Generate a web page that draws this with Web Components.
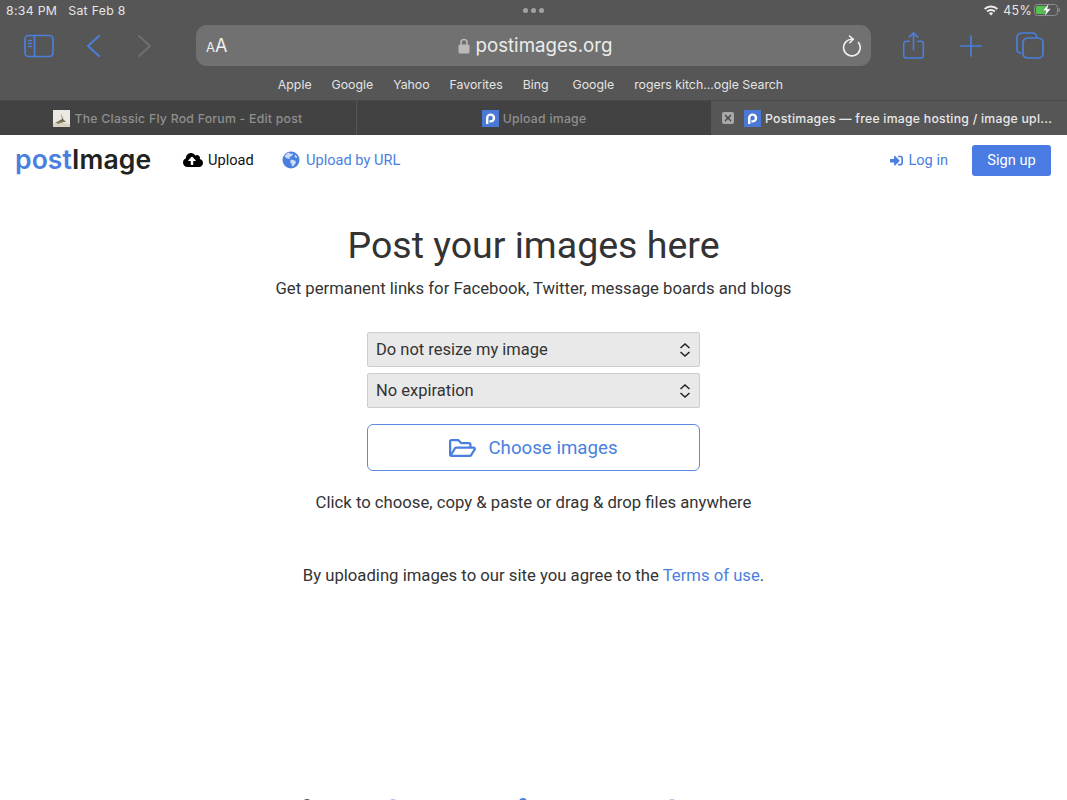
<!DOCTYPE html>
<html lang="en">
<head>
<meta charset="utf-8">
<title>Postimages</title>
<style>
  html, body { margin: 0; height: 800px; overflow: hidden; background: #fff; }
</style>
</head>
<body>
<safari-chrome></safari-chrome>
<site-header></site-header>
<upload-panel></upload-panel>
<feature-row></feature-row>

<script>
const PI_ICON = `<svg viewBox="0 0 17 17" width="17" height="17"><rect width="17" height="17" fill="#4a78d6"/><path d="M4 14V8a4.6 4.6 0 1 1 4.6 4.6H7.4V10.200h1.200a2.200 2.200 0 1 0-2.200-2.200V14z" fill="#fff"/></svg>`;

class SafariChrome extends HTMLElement {
  constructor() {
    super();
    this.attachShadow({ mode: 'open' });
    this.shadowRoot.innerHTML = `
      <style>
        :host {
          display: block;
          height: 135px;
          background: #565656;
          color: #eee;
          font-family: Inter, "Noto Sans", sans-serif;
        }
        .status {
          height: 22px;
          box-sizing: border-box;
          padding: 0 7px 2px 6px;
          display: grid;
          grid-template-columns: 1fr auto 1fr;
          align-items: center;
          font-size: 12.3px;
          letter-spacing: .3px;
          color: #e6e6e6;
        }
        .status .left { display: flex; gap: 11px; }
        .dots { display: flex; gap: 3px; }
        .dots i { width: 5px; height: 5px; border-radius: 50%; background: #a2a2a2; }
        .status .right { display: flex; justify-content: flex-end; align-items: center; gap: 4px; font-size: 12.5px; }
        .status .battery { margin-left: -2px; }
        .toolbar {
          height: 47px;
          display: flex;
          align-items: center;
        }
        .toolbar svg { display: block; fill: none; stroke: #4a7fdb; stroke-width: 1.7; stroke-linecap: round; stroke-linejoin: round; }
        .address {
          width: 675px;
          height: 41px;
          margin: 0 31px 0 0;
          box-sizing: border-box;
          border-radius: 11px;
          background: #717171;
          display: grid;
          grid-template-columns: 1fr auto 1fr;
          align-items: center;
          padding: 0 10px;
        }
        .aa { font-size: 13px; line-height: 1; color: #f0f0f0; padding-top: 1px; }
        .aa b { font-weight: 400; font-size: 18px; }
        .url { display: flex; align-items: center; gap: 5px; margin-left: 4px; font-size: 18.7px; color: #ececec; }
        .reload { justify-self: end; }
        .reload svg { stroke: #f0f0f0; }
        .marks {
          height: 31px;
          display: flex;
          justify-content: center;
          align-items: center;
          gap: 20px;
          font-size: 12.3px;
          color: #e4e4e4;
          padding-right: 6px;
        }
        .tabs {
          height: 35px;
          display: grid;
          grid-template-columns: 356px 355px 1fr;
          box-sizing: border-box;
          border-top: 1px solid #4a4a4a;
          font-size: 12.25px;
          font-weight: 500;
          letter-spacing: .25px;
        }
        .tab {
          display: flex;
          align-items: center;
          justify-content: center;
          gap: 4px;
          background: #424242;
          color: #8f8f8f;
          white-space: nowrap;
        }
        .tab + .tab { border-left: 1px solid #555; }
        .tab.active { background: #565656; color: #e8e8e8; justify-content: flex-start; padding-left: 11px; gap: 4px; border-left: 0; }
        .close {
          width: 12px; height: 12px; border-radius: 2px; background: #a8a8a8;
          margin-right: 6px; display: grid; place-items: center;
        }
      </style>
      <div class="status">
        <div class="left"><span>8:34 PM</span><span>Sat Feb 8</span></div>
        <div class="dots"><i></i><i></i><i></i></div>
        <div class="right">
          <svg width="16" height="12" viewBox="0 0 16 12"><path d="M1 4.300a10 10 0 0 1 14 0l-1.300 1.400a8.200 8.200 0 0 0-11.400 0z M3.500 6.800a6.500 6.500 0 0 1 9 0l-1.300 1.400a4.600 4.600 0 0 0-6.400 0z M5.900 9.300a3 3 0 0 1 4.200 0L8 11.400z" fill="#eee"/></svg>
          <span>45%</span>
          <svg class="battery" width="26" height="14" viewBox="0 0 26 14">
            <rect x=".5" y="1.500" width="23" height="11" rx="3" fill="none" stroke="#8e8e8e"/>
            <rect x="2" y="3" width="11" height="8" rx="1.500" fill="#54c24f"/>
            <rect x="24.500" y="5" width="1.200" height="4" fill="#8e8e8e"/>
            <path d="M15 0L8.500 7.800h3.500L10 14l7-8.200h-3.500z" fill="#fff" stroke="#565656" stroke-width=".5"/>
          </svg>
        </div>
      </div>
      <div class="toolbar">
        <svg style="margin-left:24px" width="30" height="24" viewBox="0 0 30 24"><rect x="1" y="1.500" width="28" height="21" rx="3.500"/><path d="M10.500 1.500v21"/><path d="M4.500 6.500h3M4.500 9.500h3M4.500 12.500h3" stroke-width="1.300"/></svg>
        <svg style="margin-left:32px" width="15" height="24" viewBox="0 0 15 24"><path d="M13 2L2 12l11 10" stroke-width="2"/></svg>
        <svg style="margin-left:36px;stroke:#6f6f6f" width="15" height="24" viewBox="0 0 15 24"><path d="M2 2l11 10L2 22" stroke-width="2"/></svg>
        <svg style="margin-left:43px;width:1px"></svg>
        <div class="address">
          <span class="aa">A<b>A</b></span>
          <span class="url">
            <svg width="12" height="16" viewBox="0 0 12 16" style="stroke:none"><path d="M3 7V4.500a3 3 0 0 1 6 0V7" fill="none" stroke="#b9b9b9" stroke-width="1.500"/><rect x="0.500" y="6.500" width="11" height="9" rx="1.500" fill="#b9b9b9"/></svg>
            postimages.org
          </span>
          <span class="reload">
            <svg width="20" height="22" viewBox="0 0 20 22"><path d="M12 4.300A8.300 8.300 0 1 0 17.500 7.500" stroke-width="1.600"/><path d="M8.500 1l3.800 3.300-3.500 3.500" stroke-width="1.600"/></svg>
          </span>
        </div>
        <svg width="23" height="27" viewBox="0 0 23 29"><path d="M7 10H3.500A2.500 2.500 0 0 0 1 12.500v13A2.500 2.500 0 0 0 3.500 28h16a2.500 2.500 0 0 0 2.500-2.500v-13a2.500 2.500 0 0 0-2.500-2.500H16"/><path d="M11.500 19V1.500M7 5.500l4.500-4.500L16 5.500"/></svg>
        <svg style="margin-left:35px" width="22" height="22" viewBox="0 0 22 22"><path d="M11 1v20M1 11h20"/></svg>
        <svg style="margin-left:34px" width="28" height="27" viewBox="0 0 28 27"><path d="M4.500 21A3.500 3.500 0 0 1 1 17.500v-12A4.500 4.500 0 0 1 5.500 1H17a3.500 3.500 0 0 1 3.500 3.500"/><rect x="7" y="6" width="20" height="20" rx="4.500"/></svg>
      </div>
      <div class="marks">
        <span>Apple</span><span>Google</span><span>Yahoo</span><span>Favorites</span><span>Bing</span>
        <span style="margin-left:4px">Google</span><span>rogers kitch...ogle Search</span>
      </div>
      <div class="tabs">
        <div class="tab">
          <svg width="17" height="17" viewBox="0 0 17 17"><rect width="17" height="17" fill="#ece9e2"/><path d="M0 14c4-2 10-1 17 0v3H0z" fill="#d8d2c2"/><path d="M8 3l1 6-5 3h9l-3-3z" fill="#6e6552"/><path d="M2 12l12-1-9 3z" fill="#8c8168"/></svg>
          <span>The Classic Fly Rod Forum - Edit post</span>
        </div>
        <div class="tab">${PI_ICON}<span>Upload image</span></div>
        <div class="tab active">
          <span class="close"><svg width="8" height="8" viewBox="0 0 8 8"><path d="M1 1l6 6M7 1L1 7" stroke="#444" stroke-width="1.400"/></svg></span>
          ${PI_ICON}<span>Postimages — free image hosting / image upl...</span>
        </div>
      </div>`;
  }
}

class SiteHeader extends HTMLElement {
  constructor() {
    super();
    this.attachShadow({ mode: 'open' });
    this.shadowRoot.innerHTML = `
      <style>
        :host {
          display: flex;
          align-items: center;
          height: 50px;
          padding: 0 16px 0 15px;
          font-family: Roboto, sans-serif;
          font-size: 14.600px;
          color: #4a7fe0;
        }
        .logo {
          font-family: Inter, Roboto, sans-serif;
          font-size: 26.500px;
          font-weight: 600;
          letter-spacing: .1px;
          color: #222;
          width: 168px;
          margin-bottom: 2px;
          white-space: nowrap;
        }
        .logo span { color: #4a7fe0; }
        .item { display: flex; align-items: center; gap: 6px; }
        .upload { color: #111; width: 99px; gap: 5px; }
        .spacer { flex: 1; }
        .login { margin-right: 24px; gap: 5px; }
        .signup {
          width: 79px; height: 31px;
          display: grid; place-items: center;
          background: #4a7be3;
          color: #fff;
          border-radius: 3px;
        }
      </style>
      <div class="logo"><span>post</span>Image</div>
      <div class="item upload">
        <svg width="20" height="16" viewBox="0 0 640 512"><path fill="#000" d="M537.600 226.600c4.100-10.700 6.400-22.400 6.400-34.600 0-53-43-96-96-96-19.700 0-38.100 6-53.300 16.200C367 64.200 315.300 32 256 32c-88.400 0-160 71.600-160 160 0 2.700.1 5.400.2 8.100C40.200 219.800 0 273.200 0 336c0 79.500 64.500 144 144 144h368c70.700 0 128-57.300 128-128 0-61.900-44-113.600-102.400-125.400zM393.400 288H328v112c0 8.800-7.200 16-16 16h-48c-8.800 0-16-7.200-16-16V288h-65.400c-14.300 0-21.400-17.200-11.300-27.300l105.400-105.400c6.200-6.200 16.400-6.200 22.600 0l105.400 105.400c10.100 10.100 2.900 27.300-11.300 27.300z"/></svg>
        <span>Upload</span>
      </div>
      <div class="item">
        <svg width="18" height="18" viewBox="0 0 18 18"><circle cx="9" cy="9" r="8.500" fill="#4a7fe0"/><path d="M6 1.500L9.500 3l2-.5L10 5 8 5.500 7.500 8 4 7 2.500 5z M9 8.500l4 1 1 2-2.500 3.500-1.500.5-.5-3-1.500-1.500z M13.500 3.500l2 3-1.500 .5-1.500-1.500z" fill="#cfdcf6"/></svg>
        <span>Upload by URL</span>
      </div>
      <div class="spacer"></div>
      <div class="item login">
        <svg width="13" height="13" viewBox="0 0 512 512"><path fill="#4a7fe0" d="M416 448h-84c-6.600 0-12-5.400-12-12v-40c0-6.600 5.400-12 12-12h84c17.700 0 32-14.300 32-32V160c0-17.700-14.300-32-32-32h-84c-6.600 0-12-5.400-12-12V76c0-6.600 5.400-12 12-12h84c53 0 96 43 96 96v192c0 53-43 96-96 96zm-47-201L201 79c-15-15-41-4.500-41 17v96H24c-13.300 0-24 10.700-24 24v96c0 13.300 10.700 24 24 24h136v96c0 21.500 26 32 41 17l168-168c9.300-9.400 9.300-24.600 0-34z"/></svg>
        <span>Log in</span>
      </div>
      <div class="signup">Sign up</div>`;
  }
}

const selectTemplate = document.createElement('template');
selectTemplate.innerHTML = `
  <style>
    :host {
      display: flex;
      align-items: center;
      justify-content: space-between;
      box-sizing: border-box;
      width: 333px;
      height: 35px;
      padding: 0 8px 0 8px;
      background: #e9e9e9;
      border: 1px solid #cdcdcd;
      border-radius: 2px;
      color: #333;
      font-size: 16.500px;
    }
    svg { display: block; fill: none; stroke: #222; stroke-width: 1.500; }
  </style>
  <slot></slot>
  <svg width="12" height="14" viewBox="0 0 12 14"><path d="M1.500 5L6 1l4.500 4M1.500 9L6 13l4.500-4"/></svg>`;

class PiSelect extends HTMLElement {
  constructor() {
    super();
    this.attachShadow({ mode: 'open' });
    this.shadowRoot.appendChild(selectTemplate.content.cloneNode(true));
  }
}

class UploadPanel extends HTMLElement {
  constructor() {
    super();
    this.attachShadow({ mode: 'open' });
    this.shadowRoot.innerHTML = `
      <style>
        :host {
          display: flex;
          flex-direction: column;
          align-items: center;
          font-family: Roboto, sans-serif;
          color: #333;
          font-size: 16.700px;
        }
        h1 {
          margin: 38px 0 0;
          font-size: 37.500px;
          font-weight: 400;
          line-height: 44px;
        }
        .sub { margin-top: 10px; line-height: 24px; }
        .selects { margin-top: 31px; display: flex; flex-direction: column; gap: 6px; }
        .choose {
          margin-top: 16px;
          box-sizing: border-box;
          width: 333px;
          height: 47px;
          border: 1px solid #5a8ae4;
          border-radius: 6px;
          color: #4a7fe0;
          font-size: 18.700px;
          display: flex;
          align-items: center;
          justify-content: center;
          gap: 12px;
        }
        .hint { margin-top: 20px; line-height: 24px; }
        .terms { margin-top: 49px; line-height: 24px; }
        a { color: #4a7fe0; text-decoration: none; }
      </style>
      <h1>Post your images here</h1>
      <div class="sub">Get permanent links for Facebook, Twitter, message boards and blogs</div>
      <div class="selects">
        <pi-select>Do not resize my image</pi-select>
        <pi-select>No expiration</pi-select>
      </div>
      <div class="choose">
        <svg width="27" height="24" viewBox="0 0 576 512"><path fill="#4a7fe0" d="M527.900 224H480v-48c0-26.500-21.500-48-48-48H272l-64-64H48C21.500 64 0 85.500 0 112v288c0 26.500 21.500 48 48 48h400c16.500 0 31.900-8.500 40.700-22.600l79.900-128c20-31.900-3-73.400-40.700-73.400zM48 118c0-3.300 2.700-6 6-6h134.100l64 64H426c3.300 0 6 2.700 6 6v42H152c-16.800 0-32.400 8.800-41.100 23.200L48 351.400zm400 282H72l77.200-128H528z"/></svg>
        <span>Choose images</span>
      </div>
      <div class="hint">Click to choose, copy &amp; paste or drag &amp; drop files anywhere</div>
      <div class="terms">By uploading images to our site you agree to the <a href="#">Terms of use</a>.</div>`;
  }
}

// only the tops of these icons show at the bottom of the window
class FeatureRow extends HTMLElement {
  constructor() {
    super();
    this.attachShadow({ mode: 'open' });
    this.shadowRoot.innerHTML = `
      <style>
        :host {
          display: flex;
          margin-top: 211px;
          padding-left: 303px;
          height: 12px;
        }
        i { display: block; width: 8px; height: 8px; border-radius: 50%; }
        i:nth-of-type(1) { background: #555; }
        i:nth-of-type(2) { background: #a9c1ee; margin-left: 78px; }
        i:nth-of-type(3) { background: #4a7fe0; margin-left: 122px; margin-top: -1px; }
        i:nth-of-type(4) { background: #a9c1ee; margin-left: 141px; }
      </style>
      <i></i><i></i><i></i><i></i>`;
  }
}

customElements.define('safari-chrome', SafariChrome);
customElements.define('site-header', SiteHeader);
customElements.define('pi-select', PiSelect);
customElements.define('upload-panel', UploadPanel);
customElements.define('feature-row', FeatureRow);
</script>
</body>
</html>
